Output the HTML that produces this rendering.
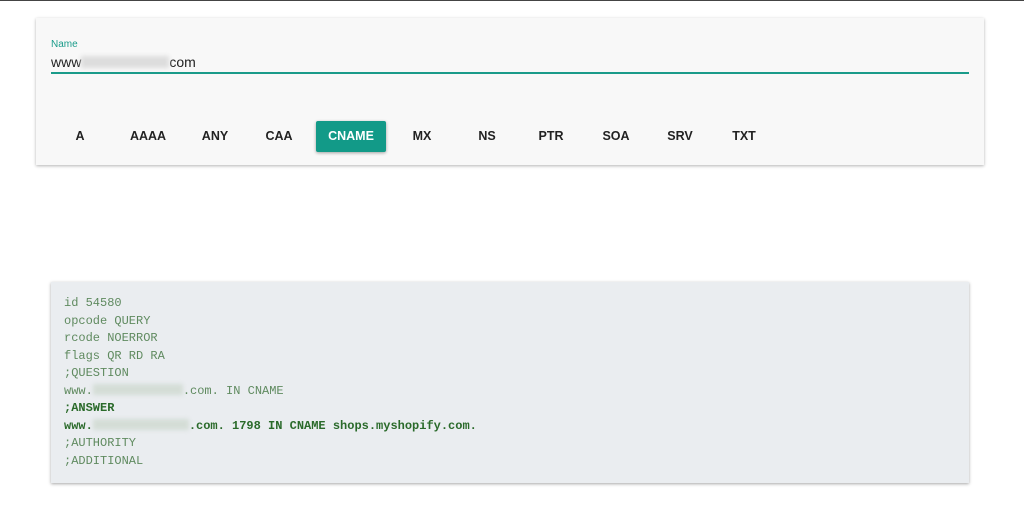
<!DOCTYPE html>
<html><head><meta charset="utf-8"><style>
body{margin:0;width:1024px;height:520px;background:#fff;position:relative;overflow:hidden;font-family:"Liberation Sans",sans-serif}
.top{position:absolute;left:0;top:0;width:1024px;height:1px;background:#444}
.card{position:absolute;left:36px;top:18px;width:948px;height:147px;background:#f8f8f8;box-shadow:0 1px 3px rgba(0,0,0,.3)}
.lbl{position:absolute;left:15px;top:21px;font-size:10px;color:#1a9b8a}
.val{position:absolute;left:15px;top:36px;font-size:14px;color:#222}
.blur{display:inline-block;width:88px;height:12px;background:#ddd;filter:blur(2px);vertical-align:-1px}
.line{position:absolute;left:15px;top:54px;width:918px;height:2px;background:#1a9b8a}
.btn{position:absolute;top:103px;height:31px;line-height:31px;font-size:12.5px;font-weight:bold;color:#222;transform:translateX(-50%);text-align:center}
.btn.sel{background:#129a88;color:#fff;width:70px;border-radius:2px;box-shadow:0 1px 3px rgba(0,0,0,.35)}
.out{position:absolute;left:51px;top:282px;width:918px;height:201px;background:#eaedf0;box-shadow:0 1px 3px rgba(0,0,0,.35)}
pre{margin:0;position:absolute;left:13px;top:13px;font-family:"Liberation Mono",monospace;font-size:12px;line-height:17.5px;color:#5f8a5f}
b{color:#2a6a2a}
.gb{display:inline-block;width:68px;height:11px;background:#d4ddd6;filter:blur(2px);vertical-align:-1px}
</style></head><body>
<div class="top"></div>
<div class="card">
<div class="lbl">Name</div>
<div class="val">www<span class="blur"></span>com</div>
<div class="line"></div>
<div class="btn" style="left:44px">A</div>
<div class="btn" style="left:112px">AAAA</div>
<div class="btn" style="left:179px">ANY</div>
<div class="btn" style="left:243px">CAA</div>
<div class="btn sel" style="left:315px">CNAME</div>
<div class="btn" style="left:386px">MX</div>
<div class="btn" style="left:451px">NS</div>
<div class="btn" style="left:515px">PTR</div>
<div class="btn" style="left:580px">SOA</div>
<div class="btn" style="left:644px">SRV</div>
<div class="btn" style="left:708px">TXT</div>
</div>
<div class="out"><pre>id 54580
opcode QUERY
rcode NOERROR
flags QR RD RA
;QUESTION
www.<span class="gb" style="width:90px"></span>.com. IN CNAME
<b>;ANSWER</b>
<b>www.<span class="gb" style="width:96px"></span>.com. 1798 IN CNAME shops.myshopify.com.</b>
;AUTHORITY
;ADDITIONAL</pre></div>
</body></html>
